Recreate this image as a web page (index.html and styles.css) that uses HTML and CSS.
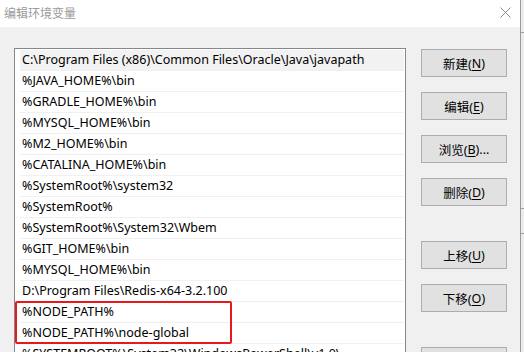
FILE: index.html
```html
<!DOCTYPE html>
<html lang="zh-CN">
<head>
<meta charset="utf-8">
<title>编辑环境变量</title>
<link rel="stylesheet" href="styles.css">
</head>
<body>
<div class="screen">
  <div class="dialog">
    <div class="titlebar">
      <span class="title">编辑环境变量</span>
      <svg class="close" width="11" height="11" viewBox="0 0 11 11"><path d="M0.5 0.5 L10.5 10.5 M10.5 0.5 L0.5 10.5" stroke="#8a8a8a" stroke-width="1" fill="none"/></svg>
    </div>
    <div class="content">
      <div class="list">
        <div class="row selected">C:\Program Files (x86)\Common Files\Oracle\Java\javapath</div>
        <div class="row">%JAVA_HOME%\bin</div>
        <div class="row">%GRADLE_HOME%\bin</div>
        <div class="row">%MYSQL_HOME%\bin</div>
        <div class="row">%M2_HOME%\bin</div>
        <div class="row">%CATALINA_HOME%\bin</div>
        <div class="row">%SystemRoot%\system32</div>
        <div class="row">%SystemRoot%</div>
        <div class="row">%SystemRoot%\System32\Wbem</div>
        <div class="row">%GIT_HOME%\bin</div>
        <div class="row">%MYSQL_HOME%\bin</div>
        <div class="row">D:\Program Files\Redis-x64-3.2.100</div>
        <div class="row">%NODE_PATH%</div>
        <div class="row">%NODE_PATH%\node-global</div>
        <div class="row">%SYSTEMROOT%\System32\WindowsPowerShell\v1.0\</div>
        <div class="highlight"></div>
      </div>
      <div class="buttons">
        <div class="btn">新建(<u>N</u>)</div>
        <div class="btn">编辑(<u>E</u>)</div>
        <div class="btn">浏览(<u>B</u>)...</div>
        <div class="btn">删除(<u>D</u>)</div>
        <div class="spacer"></div>
        <div class="btn">上移(<u>U</u>)</div>
        <div class="btn">下移(<u>O</u>)</div>
        <div class="spacer"></div>
        <div class="btn last">编辑文本(<u>T</u>)...</div>
      </div>
    </div>
  </div>
  <div class="behind">
    <div class="behind-line l1"></div>
    <div class="behind-line l2"></div>
    <div class="behind-line l3"></div>
  </div>
</div>
</body>
</html>
```
FILE: styles.css
```css
html, body {
  margin: 0;
  padding: 0;
  width: 524px;
  height: 352px;
  overflow: hidden;
  background: #e6e6e6;
}
.screen {
  display: flex;
  width: 524px;
  height: 352px;
  font-family: "Noto Sans", "Noto Sans CJK SC", sans-serif;
  font-size: 12.5px;
  color: #000;
}
.dialog {
  width: 520px;
  height: 352px;
  border-right: 1px solid #9a9a9a;
  display: flex;
  flex-direction: column;
  background: #f0f0f0;
  flex-shrink: 0;
}
.titlebar {
  height: 27px;
  background: #fff;
  display: flex;
  align-items: center;
  justify-content: space-between;
  padding: 0 9px 0 4px;
  flex-shrink: 0;
}
.title {
  font-family: "Noto Sans CJK SC", sans-serif;
  font-size: 12px;
  color: #9a9a9a;
  margin-top: -3px;
}
.close {
  margin-top: -3px;
}
.content {
  display: flex;
  padding: 21px 0 0 14px;
  gap: 15px;
  flex: 1;
  min-height: 0;
}
.list {
  position: relative;
  box-sizing: border-box;
  width: 392px;
  flex-shrink: 0;
  border: 1px solid #828790;
  border-bottom: none;
  background: #fff;
  padding: 1px 1px 0 5px;
  overflow: hidden;
}
.row {
  height: 20px;
  line-height: 20px;
  border-bottom: 1px solid #f0f0f0;
  padding-left: 2px;
  white-space: nowrap;
}
.row.selected {
  background: #f2f2f2;
}
.highlight {
  position: absolute;
  left: 0;
  top: 252px;
  width: 213px;
  height: 39px;
  border: 2px solid #e8191b;
  border-radius: 2px;
}
.buttons {
  display: flex;
  flex-direction: column;
  gap: 15px;
  padding-top: 1px;
}
.btn {
  box-sizing: border-box;
  width: 86px;
  height: 28px;
  border: 1px solid #adadad;
  background: #e1e1e1;
  display: flex;
  align-items: center;
  justify-content: center;
  font-family: "Noto Sans", "Noto Sans CJK SC", sans-serif;
  font-size: 12.5px;
  white-space: nowrap;
  flex-shrink: 0;
}
.btn.last {
  align-items: flex-end;
  padding-bottom: 3px;
}
.btn u {
  text-decoration-thickness: 1px;
  text-underline-offset: 2px;
}
.spacer {
  height: 5px;
  flex-shrink: 0;
}
.behind {
  position: relative;
  flex: 1;
  background: #ececec;
}
.behind-line {
  position: absolute;
  left: 0;
  right: 0;
  height: 1px;
  background: #a0a0a0;
}
.l1 { top: 32px; }
.l2 { top: 208px; }
.l3 { top: 233px; }
```
